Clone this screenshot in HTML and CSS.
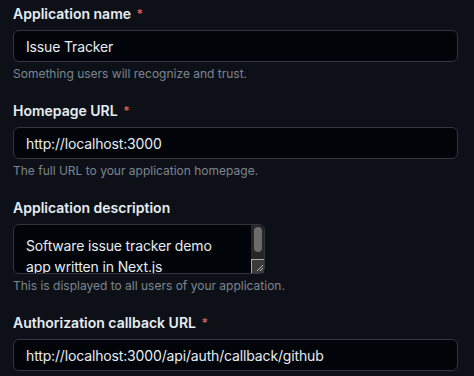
FILE: index.html
```html
<!DOCTYPE html>
<html lang="en">
<head>
<meta charset="utf-8">
<title>Register OAuth app</title>
<link rel="stylesheet" href="styles.css">
</head>
<body>
<form class="form">
  <div class="field">
    <label class="label" for="name">Application name <span class="req">*</span></label>
    <input class="input" id="name" type="text" value="Issue Tracker">
    <p class="note">Something users will recognize and trust.</p>
  </div>
  <div class="field">
    <label class="label" for="url">Homepage URL <span class="req">*</span></label>
    <input class="input" id="url" type="text" value="http://localhost:3000">
    <p class="note">The full URL to your application homepage.</p>
  </div>
  <div class="field">
    <label class="label" for="desc">Application description</label>
    <div class="area-wrap">
      <textarea class="area" id="desc">Software issue tracker demo app written in Next.js</textarea>
      <div class="scrollbar">
        <div class="thumb"></div>
        <div class="corner">
          <svg width="12" height="12" viewBox="0 0 12 12"><path d="M11 5 L5 11 M11 8 L8 11" stroke="#b5b5b5" stroke-width="1"/></svg>
        </div>
      </div>
    </div>
    <p class="note">This is displayed to all users of your application.</p>
  </div>
  <div class="field">
    <label class="label" for="cb">Authorization callback URL <span class="req">*</span></label>
    <input class="input" id="cb" type="text" value="http://localhost:3000/api/auth/callback/github">
  </div>
</form>
</body>
</html>
```

FILE: styles.css
```css
* { box-sizing: border-box; }
html, body {
  margin: 0;
  background: #0d1117;
}
body {
  font-family: Inter, "Liberation Sans", sans-serif;
  color: #e6edf3;
  overflow: hidden;
}
.form {
  display: flex;
  flex-direction: column;
  gap: 19px;
  padding: 4px 0 0 13px;
}
.field {
  display: flex;
  flex-direction: column;
}
.label {
  font-size: 14px;
  font-weight: 600;
  line-height: 20px;
  margin-bottom: 6px;
}
.req {
  color: #d9605a;
  font-size: 12px;
  margin-left: 2px;
  vertical-align: 1px;
}
.input {
  width: 445px;
  height: 32px;
  padding: 0 12px;
  font: 400 14px/20px Inter, "Liberation Sans", sans-serif;
  letter-spacing: -0.15px;
  color: #e6edf3;
  background: #010409;
  border: 1px solid #30363d;
  border-radius: 6px;
  outline: none;
}
.note {
  margin: 4px 0 0;
  font-size: 12px;
  line-height: 16px;
  color: #7d8590;
}
.area-wrap {
  position: relative;
  width: 252px;
  height: 50px;
}
.area {
  display: block;
  width: 100%;
  height: 100%;
  padding: 10px 30px 0 12px;
  font: 400 14px/21px Inter, "Liberation Sans", sans-serif;
  letter-spacing: -0.15px;
  color: #e6edf3;
  background: #010409;
  border: 1px solid #30363d;
  border-radius: 6px;
  resize: none;
  overflow: hidden;
  outline: none;
}
.scrollbar {
  position: absolute;
  top: 1px;
  right: 1px;
  bottom: 1px;
  width: 13px;
  background: #262626;
  display: flex;
  flex-direction: column;
  align-items: center;
  border-top-right-radius: 5px;
}
.thumb {
  margin-top: 2px;
  width: 8px;
  height: 25px;
  border-radius: 4px;
  background: #6b6b6b;
}
.corner {
  margin-top: auto;
  width: 13px;
  height: 14px;
  background: #3a3a3a;
  border-top: 1px solid #a8a8a8;
  border-left: 1px solid #a8a8a8;
  display: flex;
}
```
